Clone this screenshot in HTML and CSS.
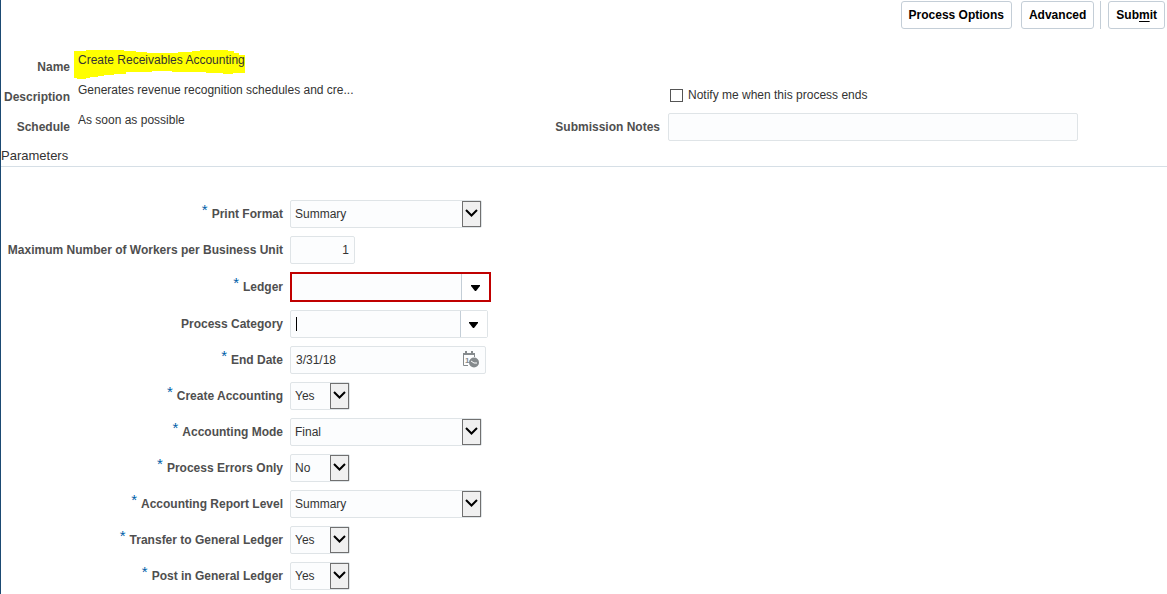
FILE: index.html
```html
<!DOCTYPE html>
<html lang="en">
<head>
  <meta charset="UTF-8">
  <title>Process Details</title>
  <meta name="viewport" content="width=device-width, initial-scale=1">
  <link rel="stylesheet" href="styles.css">
</head>
<body>

<svg class="defs" aria-hidden="true">
  <symbol id="chevron" viewBox="0 0 17 24">
    <path d="M3 8l5.500 5.500L14 8" fill="none" stroke="#000" stroke-width="2"/>
  </symbol>
  <symbol id="triangle" viewBox="0 0 10 6">
    <path d="M0 0h9v1L5 6H4L0 1z"/>
  </symbol>
</svg>

<div class="toolbar">
  <button type="button">Process Options</button>
  <button type="button">Advanced</button>
  <span class="divider"></span>
  <button type="button">Sub<u>m</u>it</button>
</div>

<div class="details">
  <div class="summary">
    <span class="label">Name</span>
    <span class="value marked">
      <svg class="marker" viewBox="0 0 172 30" aria-hidden="true">
        <path d="M0 1h12V0h38v1h12v1h11v1h31V2h14V1h8V0h28v1h6v2h5v2h6v18h-12v1h-10v-1h-17v-1H98v-1H78v1H52v2H40v1H30v1h-6v1h-8v1h-4v1H3v-1H0z"/>
      </svg>
      <span class="marked-text">Create Receivables Accounting</span>
    </span>
    <span class="label">Description</span>
    <span class="value">Generates revenue recognition schedules and cre...</span>
    <span class="label">Schedule</span>
    <span class="value">As soon as possible</span>
  </div>

  <div class="submission">
    <label class="notify"><input type="checkbox">Notify me when this process ends</label>
    <label class="label" for="notes">Submission Notes</label>
    <input type="text" class="field" id="notes">
  </div>
</div>

<h2>Parameters</h2>

<form class="parameters">
  <label for="printFormat"><span class="required">*</span>Print Format</label>
  <div class="select wide">
    <select id="printFormat"><option>Summary</option><option>Detail</option></select>
    <svg><use href="#chevron"/></svg>
  </div>

  <label for="workers">Maximum Number of Workers per Business Unit</label>
  <input type="text" class="field number" id="workers" value="1">

  <label for="ledger"><span class="required">*</span>Ledger</label>
  <div class="combo invalid">
    <input type="text" id="ledger">
    <button type="button" aria-label="Search ledger"><svg><use href="#triangle"/></svg></button>
  </div>

  <label for="category">Process Category</label>
  <div class="combo">
    <span class="caret"></span>
    <input type="text" id="category">
    <button type="button" aria-label="Search process category"><svg><use href="#triangle"/></svg></button>
  </div>

  <label for="endDate"><span class="required">*</span>End Date</label>
  <div class="date">
    <input type="text" id="endDate" value="3/31/18">
    <button type="button" aria-label="Select date">
      <svg viewBox="0 0 18 18">
        <path class="line" d="M6 14.500H1.500V3M12.500 3v3"/>
        <path d="M1 2h12v2H1zM3 0h2v3H3zM9 0h2v3H9z"/>
        <text x="3" y="12">1</text>
        <circle cx="12" cy="11.500" r="5"/>
        <path class="hands" d="M9 10l3 2h3"/>
      </svg>
    </button>
  </div>

  <label for="createAccounting"><span class="required">*</span>Create Accounting</label>
  <div class="select">
    <select id="createAccounting"><option>Yes</option><option>No</option></select>
    <svg><use href="#chevron"/></svg>
  </div>

  <label for="mode"><span class="required">*</span>Accounting Mode</label>
  <div class="select wide">
    <select id="mode"><option>Final</option><option>Draft</option></select>
    <svg><use href="#chevron"/></svg>
  </div>

  <label for="errorsOnly"><span class="required">*</span>Process Errors Only</label>
  <div class="select">
    <select id="errorsOnly"><option>No</option><option>Yes</option></select>
    <svg><use href="#chevron"/></svg>
  </div>

  <label for="reportLevel"><span class="required">*</span>Accounting Report Level</label>
  <div class="select wide">
    <select id="reportLevel"><option>Summary</option><option>Detail</option></select>
    <svg><use href="#chevron"/></svg>
  </div>

  <label for="transfer"><span class="required">*</span>Transfer to General Ledger</label>
  <div class="select">
    <select id="transfer"><option>Yes</option><option>No</option></select>
    <svg><use href="#chevron"/></svg>
  </div>

  <label for="post"><span class="required">*</span>Post in General Ledger</label>
  <div class="select">
    <select id="post"><option>Yes</option><option>No</option></select>
    <svg><use href="#chevron"/></svg>
  </div>
</form>

</body>
</html>
```

FILE: styles.css
```css
* {
  box-sizing: border-box;
}
body {
  margin: 0;
  border-left: 1px solid #1b4a73;
  background: #fff;
  color: #333;
  font-family: "Liberation Sans", Arial, sans-serif;
  font-size: 12px;
  line-height: 16px;
}
input, select, button {
  margin: 0;
  font: inherit;
  color: inherit;
}
.defs {
  position: absolute;
  width: 0;
  height: 0;
}

/* buttons at the top */
.toolbar {
  display: flex;
  justify-content: flex-end;
  padding: 1px 2px 0 0;
}
.toolbar button {
  height: 28px;
  padding: 0 7px;
  border: 1px solid #c4ced7;
  border-radius: 3px;
  background: #fff;
  color: #000;
  font-weight: bold;
}
.toolbar button + button {
  margin-left: 9px;
}
.toolbar u {
  text-underline-offset: 2px;
}
.divider {
  width: 1px;
  margin: 0 7px 0 6px;
  background: #c4ced7;
}

/* process details */
.details {
  display: flex;
  justify-content: space-between;
  align-items: flex-end;
  padding: 23px 89px 0 0;
}
.summary, .submission {
  display: grid;
  grid-template-columns: 69px auto;
  grid-auto-rows: 30px;
  column-gap: 8px;
  align-items: center;
}
.submission {
  grid-template-columns: auto 410px;
}
.label {
  color: #4f4f4f;
  font-weight: bold;
  text-align: right;
}
.value {
  align-self: start;
  white-space: nowrap;
}
.marked {
  position: relative;
}
.marker {
  position: absolute;
  top: -2px;
  left: -4px;
  width: 172px;
  height: 30px;
  fill: #ff0;
}
.marked-text {
  position: relative;
}
.notify {
  grid-column: 2;
  align-self: start;
  display: flex;
  align-items: center;
  gap: 5px;
  height: 26px;
  padding-left: 2px;
}
.notify input {
  appearance: none;
  width: 13px;
  height: 13px;
  border: 1px solid #555;
  background: #fff;
}
.notify input:checked {
  background: #555;
}
.field {
  height: 28px;
  padding: 0 5px;
  border: 1px solid #dfe4e7;
  border-radius: 2px;
  background: #fcfdfe;
}

h2 {
  margin: 0;
  padding: 6px 0 2px;
  border-bottom: 1px solid #d6dfe6;
  font-size: 13px;
  font-weight: normal;
}

/* parameters */
.parameters {
  display: grid;
  grid-template-columns: 282px 1fr;
  gap: 8px 7px;
  align-items: center;
  justify-items: start;
  padding: 33px 0 4px;
}
.parameters label {
  justify-self: end;
  color: #4f4f4f;
  font-weight: bold;
  white-space: nowrap;
}
.required {
  margin-right: 4px;
  color: #0060a8;
  font-size: 15px;
  font-weight: normal;
  line-height: 1px;
  vertical-align: 3px;
}
.number {
  width: 65px;
  text-align: right;
}
.select {
  position: relative;
  width: 60px;
  height: 28px;
}
.select.wide {
  width: 192px;
}
.select select {
  appearance: none;
  width: 100%;
  height: 100%;
  padding: 0 24px 0 4px;
  border: 1px solid #dfe4e7;
  border-radius: 2px;
  background: #fcfdfe;
}
.select svg {
  position: absolute;
  top: 1px;
  right: 1px;
  width: 19px;
  height: 26px;
  border: 1px solid #707070;
  background: #f0f0f0;
  pointer-events: none;
}
.combo, .date {
  display: flex;
  align-items: stretch;
  position: relative;
  width: 198px;
  height: 28px;
  border: 1px solid #dfe4e7;
  border-radius: 2px;
  background: #fcfdfe;
}
.combo input, .date input {
  flex: 1;
  min-width: 0;
  padding: 0 5px;
  border: 0;
  background: none;
}
.combo button {
  width: 27px;
  padding: 0;
  border: 0;
  border-left: 1px solid #c4ced7;
  background: #fff;
}
.combo button svg {
  display: block;
  width: 10px;
  height: 6px;
  margin: 2px auto 0;
  fill: #000;
}
.combo.invalid {
  width: 201px;
  height: 30px;
  border: 2px solid #c00000;
  border-radius: 0;
}
.combo.invalid button {
  width: 28px;
}
.caret {
  position: absolute;
  top: 6px;
  left: 5px;
  width: 1px;
  height: 14px;
  background: #000;
}
.date {
  width: 196px;
}
.date button {
  width: 28px;
  padding: 0;
  border: 0;
  background: none;
}
.date svg {
  display: block;
  width: 18px;
  height: 18px;
  margin: 0 auto;
  fill: #858a8d;
  font-size: 8px;
  font-weight: bold;
}
.date .line {
  fill: none;
  stroke: #858a8d;
}
.date .hands {
  fill: none;
  stroke: #fff;
}
```
